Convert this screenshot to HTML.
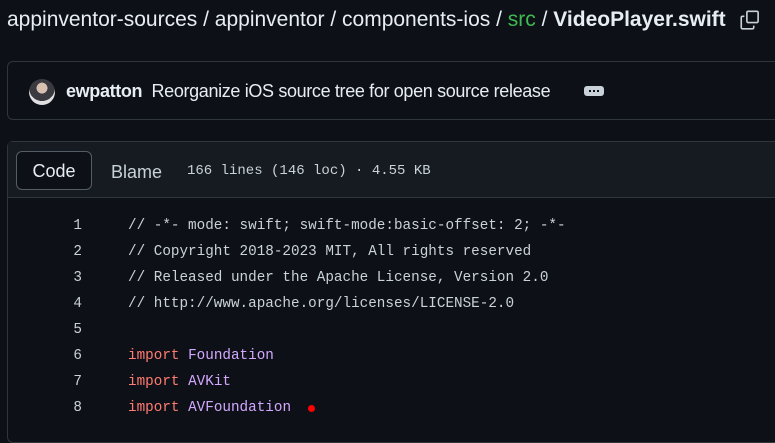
<!DOCTYPE html>
<html><head><style>
body{margin:0;width:775px;height:423px;overflow:hidden;background:#0d1117;font-family:"Liberation Sans",sans-serif;color:#e6edf3;position:relative}
.t{position:absolute;left:7px;top:8px;font-size:21px;white-space:nowrap;letter-spacing:0px}
.commit{position:absolute;left:7px;top:61px;width:800px;height:57px;border:1px solid #30363d;border-radius:6px}
.av{position:absolute;left:29px;top:79px;width:26px;height:26px;border-radius:50%;background:radial-gradient(circle at 50% 35%,#d8c0b0 0 25%,#3a3a40 26% 60%,#e0e0e0 61%)}
.ms{position:absolute;left:66px;top:81px;font-size:18px;letter-spacing:-0.35px;white-space:nowrap}
.dots{position:absolute;left:584px;top:86px;width:20px;height:10px;background:#c9d1d9;border-radius:3px}
.dots i{position:absolute;top:4px;width:2px;height:2px;background:#0d1117}
.file{position:absolute;left:7px;top:141px;width:800px;height:300px;border:1px solid #30363d;border-radius:6px}
.hdr{position:absolute;left:8px;top:142px;width:800px;height:55px;background:#161b22;border-bottom:1px solid #30363d}
.code{position:absolute;left:16px;top:151px;width:76px;height:39px;border:1px solid #545c66;border-radius:6px;background:#0d1117;font-size:18px;text-align:center;line-height:39px;box-sizing:border-box}
.blame{position:absolute;left:111px;top:162px;font-size:18px;color:#c9d1d9}
.info{position:absolute;left:187px;top:163px;font-family:"Liberation Mono",monospace;font-size:14px;color:#c9d1d9}
.l{position:absolute;font-family:"Liberation Mono",monospace;font-size:14.3px;white-space:pre;color:#c9d1d9}
.n{left:60px;width:22px;text-align:right}
.c{left:128px}
.k{color:#ff7b72}.p{color:#d2a8ff}
</style></head><body>
<div class="t">appinventor-sources / appinventor / components-ios / <span style="color:#3fb950">src</span> / <b>VideoPlayer.swift</b></div>
<svg style="position:absolute;left:740px;top:10px" width="20" height="20" viewBox="0 0 16 16" fill="none" stroke="#c9d1d9" stroke-width="1.3"><rect x="5.5" y="1" width="9" height="9" rx="1"/><path d="M3.5 5H2a1 1 0 0 0-1 1v8a1 1 0 0 0 1 1h8a1 1 0 0 0 1-1v-1.5"/></svg>
<div class="commit"></div>
<div class="av"></div>
<div class="ms"><b>ewpatton</b>&nbsp; Reorganize iOS source tree for open source release</div>
<div class="dots"><i style="left:5px"></i><i style="left:9px"></i><i style="left:13px"></i></div>
<div class="file"></div>
<div class="hdr"></div>
<div class="code">Code</div>
<div class="blame">Blame</div>
<div class="info">166 lines (146 loc) · 4.55 KB</div>
<div class="l n" style="top:218px">1</div><div class="l c" style="top:218px">// -*- mode: swift; swift-mode:basic-offset: 2; -*-</div>
<div class="l n" style="top:244px">2</div><div class="l c" style="top:244px">// Copyright 2018-2023 MIT, All rights reserved</div>
<div class="l n" style="top:270px">3</div><div class="l c" style="top:270px">// Released under the Apache License, Version 2.0</div>
<div class="l n" style="top:296px">4</div><div class="l c" style="top:296px">// http://www.apache.org/licenses/LICENSE-2.0</div>
<div class="l n" style="top:322px">5</div>
<div class="l n" style="top:348px">6</div><div class="l c" style="top:348px"><span class="k">import</span> <span class="p">Foundation</span></div>
<div class="l n" style="top:374px">7</div><div class="l c" style="top:374px"><span class="k">import</span> <span class="p">AVKit</span></div>
<div class="l n" style="top:400px">8</div><div class="l c" style="top:400px"><span class="k">import</span> <span class="p">AVFoundation</span></div>
<div style="position:absolute;left:308px;top:405px;width:7px;height:7px;border-radius:50%;background:#f00"></div>
</body></html>
